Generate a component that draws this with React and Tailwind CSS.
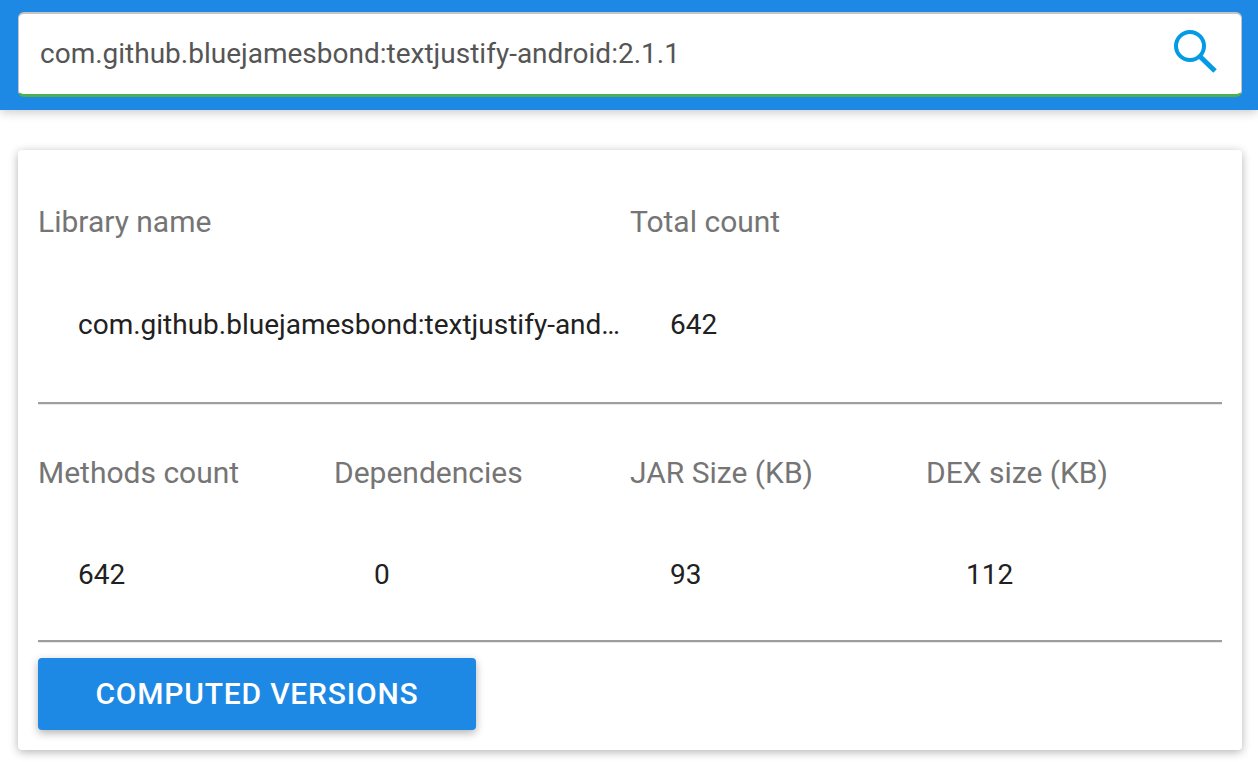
const font = "font-['Roboto',sans-serif]";

function Label({ children }) {
  return (
    <div className="w-[296px] shrink-0 h-[102px] flex items-center text-[30px] text-[#757575] whitespace-nowrap">
      {children}
    </div>
  );
}

function Value({ children, className = "w-[296px]" }) {
  return (
    <div className={"shrink-0 h-[102px] flex items-center pl-[40px] pr-[8px] pt-[1px] text-[28px] text-[#212121] " + className}>
      <span className="truncate leading-[36px]">{children}</span>
    </div>
  );
}

function Divider() {
  return <div className="h-[3px] bg-[#9e9e9e] border-b border-[#e8e8e8]" />;
}

export default function App() {
  return (
    <div className={"min-h-[762px] bg-white overflow-hidden " + font}>
      <header className="h-[110px] bg-[#1e88e5] pl-[18px] pr-[16px] pt-[12px] shadow-[0_2px_10px_rgba(0,0,0,0.22)]">
        <div className="h-[85px] bg-white rounded-[6px] border-t-2 border-x border-b-[3px] border-t-[#c4c4c4] border-x-[#c4c4c4] border-b-[#4caf50] flex items-center justify-between pl-[21px] pr-[22px]">
          <span className="text-[28px] text-[#555555]">com.github.bluejamesbond:textjustify-android:2.1.1</span>
          <svg className="-mt-[6px]" width="46" height="46" viewBox="0 0 46 46" fill="none" stroke="#039be5" strokeWidth="4">
            <circle cx="17" cy="18" r="14" />
            <path d="M27.500 29 L42 43" strokeWidth="5" />
          </svg>
        </div>
      </header>

      <main className="ml-[18px] mr-[16px] mt-[40px] h-[600px] bg-white rounded-[4px] shadow-[0_2px_10px_rgba(0,0,0,0.3)] px-[20px] pt-[20px]">
        <div className="flex">
          <div className="w-[592px]">
            <Label>Library name</Label>
          </div>
          <Label>Total count</Label>
        </div>
        <div className="flex mt-[1px]">
          <Value className="w-[592px]">com.github.bluejamesbond:textjustify-android:2.1.1</Value>
          <Value>642</Value>
        </div>

        <div className="mt-[27px]">
          <Divider />
        </div>

        <div className="flex mt-[16px]">
          <Label>Methods count</Label>
          <Label>Dependencies</Label>
          <Label>JAR Size (KB)</Label>
          <Label>DEX size (KB)</Label>
        </div>
        <div className="flex">
          <Value>642</Value>
          <Value>0</Value>
          <Value>93</Value>
          <Value>112</Value>
        </div>

        <div className="mt-[15px]">
          <Divider />
        </div>

        <button className="mt-[15px] w-[438px] h-[72px] pb-[2px] bg-[#1e88e5] rounded-[4px] text-white text-[30px] font-medium tracking-[0.8px] shadow-[0_3px_8px_rgba(0,0,0,0.3)]">
          COMPUTED VERSIONS
        </button>
      </main>
    </div>
  );
}
